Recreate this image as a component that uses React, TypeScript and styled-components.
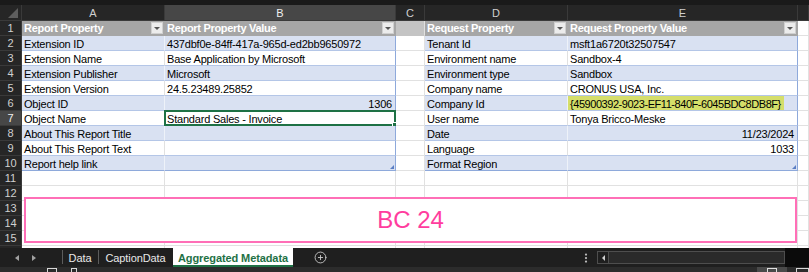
import React from "react";
import styled, { createGlobalStyle, css } from "styled-components";
import { CirclePlus, EllipsisVertical } from "lucide-react";

const GlobalStyle = createGlobalStyle`
  html, body {
    margin: 0;
    padding: 0;
    background: #1f1f1f;
  }
  body {
    font-family: "Liberation Sans", Arial, sans-serif;
  }
`;

const COLUMNS = "22px 143px 231px 29px 143px 230px 11px";
const GRID = "#e1e1e1";
const BAND = "#d9e1f2";
const BAND_LINE = "#b4c6e7";
const TABLE_EDGE = "#8ea9db";
const HEAD = "#a6a6a6";
const GREEN = "#1e7145";

const Frame = styled.div`
  width: 809px;
  height: 272px;
  overflow: hidden;
  display: flex;
  flex-direction: column;
  background: #1f1f1f;
`;
const TopStrip = styled.div`
  flex: none;
  height: 5px;
  background: #1a1a1a;
`;
const Sheet = styled.div`
  position: relative;
  flex: none;
  display: grid;
  grid-template-columns: ${COLUMNS};
  grid-template-rows: 16px repeat(16, 15px);
  height: 243px;
  overflow: hidden;
  background: #fff;
`;
const Corner = styled.div`
  background: #262626;
  border-right: 1px solid #3a3a3a;
  border-bottom: 1px solid #3a3a3a;
  display: flex;
  align-items: flex-end;
  justify-content: flex-end;
  padding: 0 3px 2px 0;
`;
const ColHead = styled.div<{ $active?: boolean }>`
  box-sizing: border-box;
  background: ${(p) => (p.$active ? "#474747" : "#262626")};
  color: ${(p) => (p.$active ? "#f0f0f0" : "#cfcfcf")};
  border-right: 1px solid #3a3a3a;
  border-bottom: 1px solid #3a3a3a;
  font-size: 11px;
  display: flex;
  align-items: center;
  justify-content: center;
`;
const RowNum = styled.div<{ $active?: boolean }>`
  box-sizing: border-box;
  background: ${(p) => (p.$active ? "#474747" : "#262626")};
  color: ${(p) => (p.$active ? "#f0f0f0" : "#d0d0d0")};
  border-right: 1px solid #3a3a3a;
  border-bottom: 1px solid #3a3a3a;
  font-size: 11px;
  line-height: 15px;
  text-align: center;
`;
const Cell = styled.div<{
  $fill?: string;
  $line?: string;
  $edge?: string;
  $right?: boolean;
  $head?: boolean;
}>`
  position: relative;
  box-sizing: border-box;
  min-width: 0;
  background: ${(p) => p.$fill ?? "#fff"};
  border-right: 1px solid ${(p) => p.$edge ?? GRID};
  border-bottom: 1px solid ${(p) => p.$line ?? GRID};
  padding: 0 3px 0 2px;
  font-size: 11px;
  letter-spacing: -0.2px;
  line-height: 16px;
  white-space: nowrap;
  color: ${(p) => (p.$head ? "#fff" : "#000")};
  font-weight: ${(p) => (p.$head ? 700 : 400)};
  text-align: ${(p) => (p.$right ? "right" : "left")};
  ${(p) =>
    p.$head &&
    css`
      display: flex;
      align-items: center;
      justify-content: space-between;
      padding-right: 1px;
      letter-spacing: -0.3px;
    `}
`;
const Filter = styled.span`
  box-sizing: border-box;
  width: 12px;
  height: 12px;
  background: #ececec;
  border: 1px solid #d0d0d0;
  display: flex;
  align-items: center;
  justify-content: center;
  &::after {
    content: "";
    border-left: 3px solid transparent;
    border-right: 3px solid transparent;
    border-top: 3px solid #555;
  }
`;
const Selection = styled.div`
  position: absolute;
  inset: -1px -1px -1px -1px;
  border: 2px solid ${GREEN};
  pointer-events: none;
  &::after {
    content: "";
    position: absolute;
    right: -4px;
    bottom: -4px;
    width: 4px;
    height: 4px;
    background: ${GREEN};
    border: 1px solid #fff;
  }
`;
const Resize = styled.span`
  position: absolute;
  right: 1px;
  bottom: 1px;
  width: 0;
  height: 0;
  border-left: 4px solid transparent;
  border-bottom: 4px solid #5b7fc4;
`;
const Mark = styled.span`
  display: inline-block;
  height: 14px;
  margin-left: -2px;
  padding: 0 3px 0 2px;
  letter-spacing: -0.45px;
  background: #d5de6a;
`;
const TextBox = styled.div`
  position: absolute;
  left: 24px;
  top: 192px;
  width: 773px;
  height: 46px;
  box-sizing: border-box;
  border: 2px solid #ff6fb7;
  background: #fff;
  color: #ff3d9e;
  font-size: 24px;
  display: flex;
  align-items: center;
  justify-content: center;
`;

const TabBar = styled.div`
  flex: none;
  height: 19px;
  display: flex;
  align-items: stretch;
  background: #1f1f1f;
  font-size: 11px;
  letter-spacing: -0.1px;
`;
const Nav = styled.div`
  width: 62px;
  box-sizing: border-box;
  padding-left: 15px;
  display: flex;
  align-items: center;
  gap: 13px;
`;
const Arrow = styled.span<{ $dir: "left" | "right" }>`
  width: 0;
  height: 0;
  border-top: 3px solid transparent;
  border-bottom: 3px solid transparent;
  ${(p) =>
    p.$dir === "left"
      ? "border-right: 4px solid #a0a0a0;"
      : "border-left: 4px solid #a0a0a0;"}
`;
const Tab = styled.div<{ $w: number; $active?: boolean }>`
  position: relative;
  width: ${(p) => p.$w}px;
  display: flex;
  align-items: center;
  justify-content: center;
  color: #e8e8e8;
  ${(p) =>
    p.$active
      ? css`
          background: #fff;
          color: ${GREEN};
          font-weight: 700;
          box-shadow: inset 0 -2px 0 ${GREEN};
        `
      : css`
          &::before {
            content: "";
            position: absolute;
            left: 0;
            top: 2px;
            bottom: 3px;
            width: 1px;
            background: #5c5c5c;
          }
        `}
`;
const AddSheet = styled.div`
  margin-left: 21px;
  display: flex;
  align-items: center;
  color: #cfcfcf;
`;
const Spacer = styled.div`
  flex: 1;
`;
const Dots = styled.div`
  width: 12px;
  margin-right: 5px;
  display: flex;
  align-items: center;
  justify-content: center;
  color: #bdbdbd;
`;
const ScrollBar = styled.div`
  width: 188px;
  margin: 3px 0 3px;
  box-sizing: border-box;
  border: 1px solid #4e4e4e;
  display: flex;
`;
const ScrollLeft = styled.div`
  width: 10px;
  display: flex;
  align-items: center;
  justify-content: center;
  border-right: 1px solid #4e4e4e;
  &::after {
    content: "";
    border-top: 3px solid transparent;
    border-bottom: 3px solid transparent;
    border-right: 3px solid #d0d0d0;
  }
`;
const Track = styled.div`
  flex: 1;
  background: #2a2a2a;
`;
const Blank = styled.div`
  width: 24px;
  background: #0b0b0b;
`;
const StatusBar = styled.div`
  flex: 1;
  background: #2c2c2c;
  display: flex;
  align-items: flex-start;
  overflow: hidden;
`;
const StatusIcon = styled.span<{ $left: number; $w: number }>`
  margin-left: ${(p) => p.$left}px;
  width: ${(p) => p.$w}px;
  height: 8px;
  margin-top: 1px;
  box-sizing: border-box;
  border: 1px solid #d8d8d8;
`;
const ViewButton = styled.span`
  margin-left: 680px;
  width: 31px;
  height: 5px;
  background: #4a4a4a;
  display: flex;
  justify-content: center;
  padding-top: 1px;
  box-sizing: border-box;
  &::after {
    content: "";
    width: 10px;
    height: 6px;
    box-sizing: border-box;
    border: 1px solid #e0e0e0;
    border-bottom: none;
  }
`;

type Pair = { key: string; value: React.ReactNode; right?: boolean };

const reportRows: Pair[] = [
  { key: "Extension ID", value: "437dbf0e-84ff-417a-965d-ed2bb9650972" },
  { key: "Extension Name", value: "Base Application by Microsoft" },
  { key: "Extension Publisher", value: "Microsoft" },
  { key: "Extension Version", value: "24.5.23489.25852" },
  { key: "Object ID", value: "1306", right: true },
  { key: "Object Name", value: "Standard Sales - Invoice" },
  { key: "About This Report Title", value: "" },
  { key: "About This Report Text", value: "" },
  { key: "Report help link", value: "" },
];

const requestRows: Pair[] = [
  { key: "Tenant Id", value: "msft1a6720t32507547" },
  { key: "Environment name", value: "Sandbox-4" },
  { key: "Environment type", value: "Sandbox" },
  { key: "Company name", value: "CRONUS USA, Inc." },
  { key: "Company Id", value: <Mark>{"{45900392-9023-EF11-840F-6045BDC8DB8F}"}</Mark> },
  { key: "User name", value: "Tonya Bricco-Meske" },
  { key: "Date", value: "11/23/2024", right: true },
  { key: "Language", value: "1033", right: true },
  { key: "Format Region", value: "" },
];

const letters = ["A", "B", "C", "D", "E", ""];

const TableHead = ({ title }: { title: string }) => (
  <Cell $head $fill={HEAD} $line={HEAD} $edge={HEAD}>
    <span>{title}</span>
    <Filter />
  </Cell>
);

const BodyPair = ({ pair, index, selected }: { pair: Pair; index: number; selected?: boolean }) => {
  const band = index % 2 === 0;
  const last = index === 8;
  const fill = band ? BAND : "#fff";
  const line = last ? TABLE_EDGE : BAND_LINE;
  return (
    <>
      <Cell $fill={fill} $line={line} $edge={band ? "#eef2f9" : GRID}>
        {pair.key}
      </Cell>
      <Cell $fill={fill} $line={line} $edge={TABLE_EDGE} $right={pair.right}>
        {pair.value}
        {selected && <Selection />}
        {last && <Resize />}
      </Cell>
    </>
  );
};

const App = () => {
  return (
    <>
      <GlobalStyle />
      <Frame>
        <TopStrip />
        <Sheet>
          <Corner>
            <svg width="10" height="10" viewBox="0 0 10 10">
              <path d="M10 0 L10 10 L0 10 Z" fill="#5e5e5e" />
            </svg>
          </Corner>
          {letters.map((l, i) => (
            <ColHead key={i} $active={l === "B"}>
              {l}
            </ColHead>
          ))}

          <RowNum>1</RowNum>
          <TableHead title="Report Property" />
          <TableHead title="Report Property Value" />
          <Cell $fill="#c4c4c4" $line="#c4c4c4" />
          <TableHead title="Request Property" />
          <TableHead title="Request Property Value" />
          <Cell />

          {reportRows.map((r, i) => (
            <React.Fragment key={r.key}>
              <RowNum $active={i === 5}>{i + 2}</RowNum>
              <BodyPair pair={r} index={i} selected={i === 5} />
              <Cell />
              <BodyPair pair={requestRows[i]} index={i} />
              <Cell />
            </React.Fragment>
          ))}

          {Array.from({ length: 6 }, (_, i) => (
            <React.Fragment key={i}>
              <RowNum>{i < 5 ? i + 11 : ""}</RowNum>
              {letters.map((_, j) => (
                <Cell key={j} />
              ))}
            </React.Fragment>
          ))}

          <TextBox>BC 24</TextBox>
        </Sheet>

        <TabBar>
          <Nav>
            <Arrow $dir="left" />
            <Arrow $dir="right" />
          </Nav>
          <Tab $w={36}>Data</Tab>
          <Tab $w={75}>CaptionData</Tab>
          <Tab $w={120} $active>
            Aggregated Metadata
          </Tab>
          <AddSheet>
            <CirclePlus size={13} strokeWidth={1.6} />
          </AddSheet>
          <Spacer />
          <Dots>
            <EllipsisVertical size={12} strokeWidth={2.5} />
          </Dots>
          <ScrollBar>
            <ScrollLeft />
            <Track />
          </ScrollBar>
          <Blank />
        </TabBar>

        <StatusBar>
          <StatusIcon $left={47} $w={10} />
          <StatusIcon $left={14} $w={6} />
          <ViewButton />
          <StatusIcon $left={9} $w={13} />
        </StatusBar>
      </Frame>
    </>
  );
};

export default App;
